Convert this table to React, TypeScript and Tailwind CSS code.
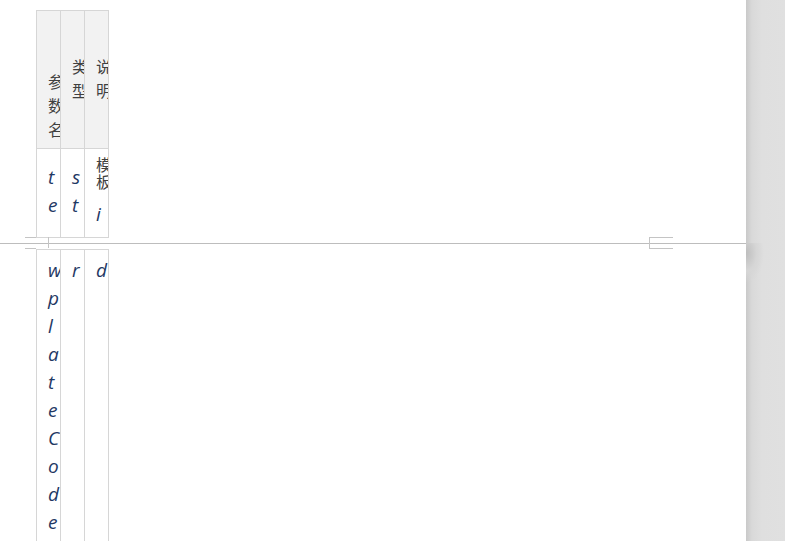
const cjk = "font-['Noto_Sans_CJK_SC',sans-serif] text-[16px] leading-[24px] text-[#404040]";
const latin = "font-['Open_Sans',sans-serif] italic text-[19px] leading-[28px] text-[#1f3864]";
const cell = "w-[24px] shrink-0 border-r border-[#d6d6d6] overflow-hidden pl-[11px]";

function Chars({ text, className }: { text: string; className: string }) {
  return (
    <div className={className}>
      {text.split("").map((ch, i) => (
        <div key={i} className="whitespace-nowrap">
          {ch}
        </div>
      ))}
    </div>
  );
}

export default function App() {
  return (
    <div className="w-[785px] h-[541px] overflow-hidden flex bg-white">
      {/* DOCUMENT AREA */}
      <div className="w-[746px] shrink-0 flex flex-col">
        {/* PAGE 1 */}
        <div className="h-[238px] shrink-0 pt-[10px] pl-[36px]">
          <div className="w-fit flex flex-col border-t border-l border-[#d6d6d6]">
            <div className="flex h-[138px] border-b border-[#d6d6d6] bg-[#f2f2f2]">
              <div className={`${cell} pt-[58px]`}>
                <Chars text="参数名" className={cjk} />
              </div>
              <div className={`${cell} pt-[43px]`}>
                <Chars text="类型" className={cjk} />
              </div>
              <div className={`${cell} pt-[43px]`}>
                <Chars text="说明" className={cjk} />
              </div>
            </div>
            <div className="flex h-[89px] border-b border-[#d6d6d6]">
              <div className={`${cell} pt-[14px]`}>
                <Chars text="te" className={latin} />
              </div>
              <div className={`${cell} pt-[14px]`}>
                <Chars text="st" className={latin} />
              </div>
              <div className={`${cell} pt-[7px]`}>
                <Chars
                  text="模板"
                  className="font-['Noto_Sans_CJK_SC',sans-serif] text-[16px] leading-[17px] text-[#404040]"
                />
                <Chars text="i" className={`${latin} mt-[10px]`} />
              </div>
            </div>
          </div>
        </div>

        {/* PAGE BREAK */}
        <div className="relative h-[11px] shrink-0">
          <div className="mt-[5px] h-px bg-[#bdbdbd]" />
          <div className="absolute left-[25px] top-[-1px] w-[11px] h-px bg-[#c4c4c4]" />
          <div className="absolute left-[25px] top-[10px] w-[11px] h-px bg-[#c4c4c4]" />
          <div className="absolute left-[48px] top-[-1px] w-px h-[11px] bg-[#c4c4c4]" />
          <div className="absolute left-[649px] top-[-1px] w-px h-[12px] bg-[#c4c4c4]" />
          <div className="absolute left-[649px] top-[-1px] w-[24px] h-px bg-[#c4c4c4]" />
          <div className="absolute left-[649px] top-[10px] w-[24px] h-px bg-[#c4c4c4]" />
        </div>

        {/* PAGE 2 */}
        <div className="flex-1 pl-[36px] flex">
          <div className="w-fit flex border-t border-l border-[#d6d6d6]">
            <div className={`${cell} pt-[6px]`}>
              <Chars text="wplateCode" className={latin} />
            </div>
            <div className={`${cell} pt-[6px]`}>
              <Chars text="r" className={latin} />
            </div>
            <div className={`${cell} pt-[6px]`}>
              <Chars text="d" className={latin} />
            </div>
          </div>
        </div>
      </div>

      {/* SIDE GUTTER */}
      <div className="flex-1 flex flex-col">
        <div className="h-[243px] bg-[linear-gradient(to_right,#c9c9c9,#d9d9d9_6px,#dfdfdf_16px,#e0e0e0)]" />
        <div className="flex-1 bg-[radial-gradient(ellipse_18px_30px_at_0px_10px,#bdbdbd,#d6d6d6_60%,transparent),linear-gradient(to_right,#c9c9c9,#d9d9d9_6px,#dfdfdf_16px,#e0e0e0)]" />
      </div>
    </div>
  );
}
